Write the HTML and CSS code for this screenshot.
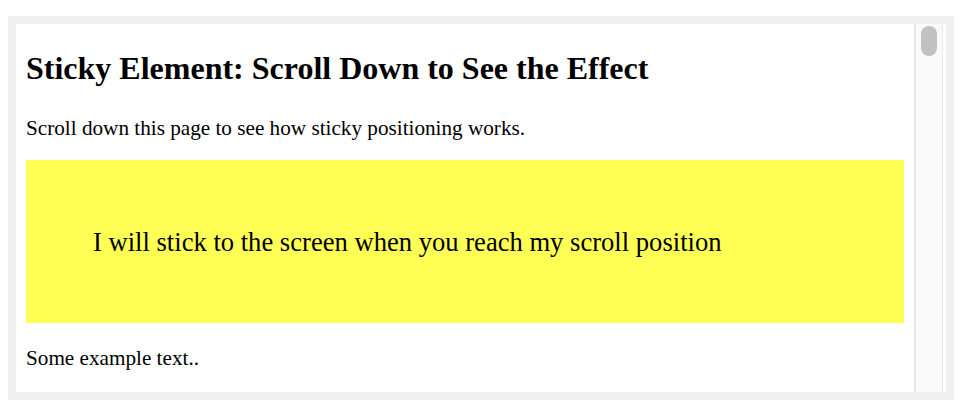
FILE: index.html
```html
<!DOCTYPE html>
<html>
<head>
<meta charset="utf-8">
<link rel="stylesheet" href="styles.css">
</head>
<body>
<div class="frame">
  <div class="viewport">
    <div class="content">
      <h1 class="title">Sticky Element: Scroll Down to See the Effect</h1>
      <p class="text intro">Scroll down this page to see how sticky positioning works.</p>
      <div class="sticky">I will stick to the screen when you reach my scroll position</div>
      <p class="text after">Some example text..</p>
    </div>
    <div class="scrollbar"><div class="thumb"></div></div>
    <div class="gap"></div>
  </div>
</div>
</body>
</html>
```
FILE: styles.css
```css
html, body {
  margin: 0;
  padding: 0;
  background: #ffffff;
}
body {
  padding: 16px 8px 0 8px;
  font-family: "Liberation Serif", "Times New Roman", serif;
  color: #000;
}
.frame {
  background: #f0f0f0;
  padding: 8px;
  width: 930px;
  height: 368px;
}
.viewport {
  background: #ffffff;
  display: flex;
  height: 368px;
  overflow: hidden;
}
.content {
  flex: 1;
  padding: 0 10px;
  min-width: 0;
}
.title {
  font-size: 32px;
  font-weight: bold;
  margin: 26px 0 0 0;
  line-height: 37px;
}
.text {
  font-size: 21.2px;
  line-height: 24px;
  margin: 0;
}
.intro {
  margin-top: 29px;
}
.after {
  margin-top: 23px;
}
.sticky {
  background: #ffff55;
  font-size: 26.6px;
  margin-top: 20px;
  padding: 67px 67px 65px 67px;
  line-height: 31px;
  height: 31px;
}
.scrollbar {
  width: 26px;
  background: #fafafa;
  border-left: 2px solid #e6e6e6;
  border-right: 1px solid #e8e8e8;
  position: relative;
}
.thumb {
  position: absolute;
  left: 5px;
  top: 2px;
  width: 16px;
  height: 30px;
  border-radius: 8px;
  background: #c1c1c1;
}
.gap {
  width: 3px;
  background: #ffffff;
}
```
